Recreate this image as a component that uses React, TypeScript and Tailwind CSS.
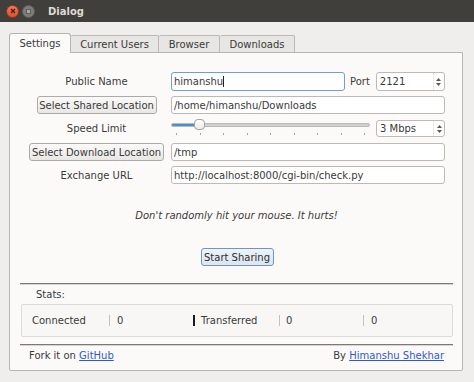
import React from "react";

const font = "font-['DejaVu_Sans',sans-serif]";

function Input({ value, focused, cursor, className = "" }: { value: string; focused?: boolean; cursor?: boolean; className?: string }) {
  return (
    <div
      className={`h-full flex items-center bg-white rounded-[3px] pl-[2px] border ${
        focused ? "border-[#6d9fd3]" : "border-[#bdbab6]"
      } ${className}`}
    >
      <span className="whitespace-nowrap">{value}</span>
      {cursor && <span className="inline-block w-px h-[11px] bg-[#222]" />}
    </div>
  );
}

function Spin({ value }: { value: string }) {
  return (
    <div className="flex h-full w-[69px] bg-white border border-[#bdbab6] rounded-[3px]">
      <div className="flex-1 flex items-center pl-[3px]">{value}</div>
      <div className="w-[11px] flex flex-col items-center justify-center gap-[2px] border-l border-[#ebe9e6]">
        <svg width="5" height="3" viewBox="0 0 5 3">
          <path d="M0 3 L2.5 0 L5 3 Z" fill="#5a5855" />
        </svg>
        <svg width="5" height="3" viewBox="0 0 5 3">
          <path d="M0 0 L2.5 3 L5 0 Z" fill="#5a5855" />
        </svg>
      </div>
    </div>
  );
}

function Button({ children, className = "" }: { children: React.ReactNode; className?: string }) {
  return (
    <div
      className={`h-full flex items-center justify-center rounded-[3px] border border-[#adaba7] bg-gradient-to-b from-[#fbfaf9] to-[#e9e7e4] whitespace-nowrap ${className}`}
    >
      {children}
    </div>
  );
}

function Slider() {
  const ticks = [0, 1, 2, 3, 4, 5, 6, 7, 8];
  return (
    <div className="relative w-[199px] h-full">
      <div className="mt-[3px] h-[4px] rounded-full bg-[#d2d0cd] border border-[#bcbab7] overflow-hidden">
        <div className="h-full w-[25px] bg-[#4a8fd0]" />
      </div>
      <div className="relative h-[6px] mt-[6px]">
        {ticks.map((i) => (
          <div
            key={i}
            className="absolute top-0 w-px h-[2px] bg-[#a3a19e]"
            style={{ left: 5 + i * 23.5 }}
          />
        ))}
      </div>
      <div className="absolute left-[23px] top-[-1px] w-[11px] h-[11px] rounded-[4px] border border-[#a5a3a0] bg-gradient-to-b from-white to-[#ecebe9]" />
    </div>
  );
}

export default function App() {
  return (
    <div className={`w-[474px] h-[382px] bg-[#efeeec] text-[10px] text-[#3a3a3a] overflow-hidden ${font}`}>
      {/* Title bar */}
      <div className="h-[22px] bg-[#403f3b] flex items-center pl-[6px]">
        <div className="w-[13px] h-[13px] rounded-full bg-gradient-to-b from-[#f07a55] to-[#d9502d] border border-[#9c3a22] flex items-center justify-center">
          <svg width="6" height="6" viewBox="0 0 6 6">
            <path d="M1 1 L5 5 M5 1 L1 5" stroke="#4a1a10" strokeWidth="1.3" />
          </svg>
        </div>
        <div className="ml-[3px] w-[13px] h-[13px] rounded-full bg-[#7d7c77] border border-[#5e5d59] flex items-center justify-center">
          <div className="w-[5px] h-[5px] bg-[#a8a7a2] border border-[#5e5d59]" />
        </div>
        <div className="ml-[13px] font-bold text-[#dfdbd2] text-[10px]">Dialog</div>
      </div>

      {/* Tabs */}
      <div className="mt-[11px] ml-[9px] flex items-end h-[19px]">
        <div className="relative z-10 h-[20px] -mb-px w-[62px] flex items-center justify-center bg-[#fbfaf9] border border-b-0 border-[#b7b5b1] rounded-t-[3px] pb-[1px]">
          Settings
        </div>
        <div className="h-[17px] w-[88px] flex items-center justify-center bg-[#e8e6e3] border border-l-0 border-b-0 border-[#bcbab6] rounded-t-[2px]">
          Current Users
        </div>
        <div className="h-[17px] w-[61px] flex items-center justify-center bg-[#e8e6e3] border border-l-0 border-b-0 border-[#bcbab6] rounded-t-[2px]">
          Browser
        </div>
        <div className="h-[17px] w-[75px] flex items-center justify-center bg-[#e8e6e3] border border-l-0 border-b-0 border-[#bcbab6] rounded-t-[2px]">
          Downloads
        </div>
      </div>

      {/* Pane */}
      <div className="ml-[9px] w-[454px] h-[319px] bg-[#fbfaf9] border border-[#b7b5b1] rounded-b-[2px] flex flex-col">
        <div className="pt-[19px] pl-[19px] flex flex-col">
          {/* Row 1 */}
          <div className="flex h-[19px]">
            <div className="w-[135px] flex items-center justify-center">Public Name</div>
            <div className="ml-[7px] flex w-[274px] h-full">
              <Input value="himanshu" focused cursor className="w-[174px]" />
              <div className="ml-[5px] flex items-center">Port</div>
              <div className="ml-[6px] h-full">
                <Spin value="2121" />
              </div>
            </div>
          </div>
          {/* Row 2 */}
          <div className="flex h-[18px] mt-[5px]">
            <div className="w-[135px] flex justify-center h-full">
              <Button className="w-[120px]">Select Shared Location</Button>
            </div>
            <div className="ml-[7px] w-[274px] h-full">
              <Input value="/home/himanshu/Downloads" />
            </div>
          </div>
          {/* Row 3 */}
          <div className="flex h-[17px] mt-[6px]">
            <div className="w-[135px] flex items-center justify-center">Speed Limit</div>
            <div className="ml-[7px] w-[274px] h-full flex">
              <Slider />
              <div className="ml-[6px] h-full">
                <Spin value="3 Mbps" />
              </div>
            </div>
          </div>
          {/* Row 4 */}
          <div className="flex h-[18px] mt-[6px]">
            <div className="w-[135px] flex justify-center h-full">
              <Button className="w-[135px]">Select Download Location</Button>
            </div>
            <div className="ml-[7px] w-[274px] h-full">
              <Input value="/tmp" />
            </div>
          </div>
          {/* Row 5 */}
          <div className="flex h-[18px] mt-[5px]">
            <div className="w-[135px] flex items-center justify-center">Exchange URL</div>
            <div className="ml-[7px] w-[274px] h-full">
              <Input value="http://localhost:8000/cgi-bin/check.py" />
            </div>
          </div>
        </div>

        {/* Italic text */}
        <div className="mt-[26px] h-[12px] leading-[12px] text-center italic pl-[1px]">
          Don't randomly hit your mouse. It hurts!
        </div>

        {/* Start Sharing */}
        <div className="mt-[26px] flex justify-center pl-[2px]">
          <div className="h-[18px] w-[73px] flex items-center justify-center rounded-[3px] border border-[#6f96c2] bg-gradient-to-b from-[#eef3f9] to-[#dbe5f0] text-[#2e2e2e]">
            Start Sharing
          </div>
        </div>

        {/* Stats section */}
        <div className="ml-[10px] mr-[9px] mt-[17px] flex flex-col">
          <div className="h-px bg-[#7c7a76]" />
          <div className="h-px bg-[#d6d4d0]" />
          <div className="mt-[4px] h-[12px] leading-[12px] pl-[16px]">Stats:</div>
          <div className="mt-[3px] ml-px h-[33px] border border-[#dddbd7] rounded-[2px] bg-[#f8f7f5] flex items-center pl-[10px]">
            <div className="w-[77px]">Connected</div>
            <div className="w-px h-[11px] bg-[#c4c2be]" />
            <div className="ml-[7px] w-[76px]">0</div>
            <div className="w-[2px] h-[11px] bg-[#1a1a1a]" />
            <div className="ml-[6px] w-[78px]">Transferred</div>
            <div className="w-px h-[11px] bg-[#c4c2be]" />
            <div className="ml-[6px] w-[77px]">0</div>
            <div className="w-px h-[11px] bg-[#c4c2be]" />
            <div className="ml-[7px]">0</div>
          </div>
          <div className="mt-[7px] h-px bg-[#7c7a76]" />
          <div className="h-px bg-[#d6d4d0]" />
          <div className="mt-[4px] h-[12px] leading-[12px] flex justify-between pl-[9px] pr-[9px]">
            <span>
              Fork it on <span className="text-[#2f59d4] underline">GitHub</span>
            </span>
            <span>
              By <span className="text-[#2f59d4] underline">Himanshu Shekhar</span>
            </span>
          </div>
        </div>
      </div>
    </div>
  );
}
